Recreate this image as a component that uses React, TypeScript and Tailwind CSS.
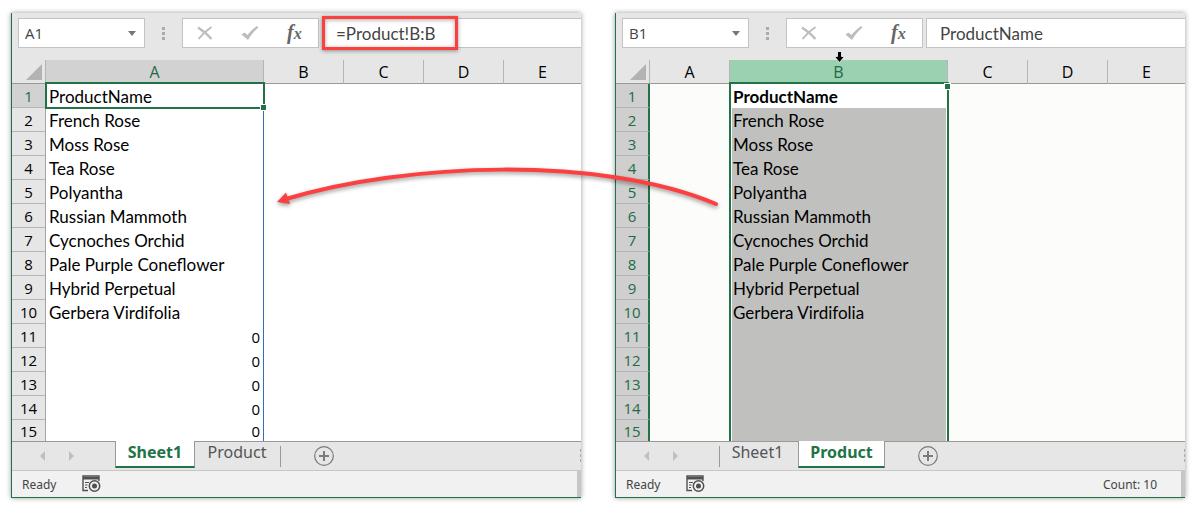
import { ReactNode } from "react";
import clsx from "clsx";

const products = [
  "ProductName",
  "French Rose",
  "Moss Rose",
  "Tea Rose",
  "Polyantha",
  "Russian Mammoth",
  "Cycnoches Orchid",
  "Pale Purple Coneflower",
  "Hybrid Perpetual",
  "Gerbera Virdifolia",
];

const rows = Array.from({ length: 15 }, (_, i) => i + 1);
const letters = ["A", "B", "C", "D", "E"];

function Grip() {
  return (
    <div className="flex flex-col gap-0.5">
      <span className="size-[3px] bg-[#ababab]" />
      <span className="size-[3px] bg-[#ababab]" />
      <span className="size-[3px] bg-[#ababab]" />
    </div>
  );
}

type FormulaBarProps = { id: string; cell: string; formula: string; children?: ReactNode };

function FormulaBar({ id, cell, formula, children }: FormulaBarProps) {
  return (
    <div className="flex h-[47px] items-start pt-[5px] pl-1.5 font-['Lato',sans-serif] text-[17px] text-[#444]">
      <div className="flex h-[30px] w-[127px] shrink-0 items-center border border-[#c3c3c3] bg-white">
        <input
          id={`${id}-name`}
          aria-label="Name Box"
          defaultValue={cell}
          className="w-full min-w-0 flex-1 pl-1.5 font-['Open_Sans',sans-serif] text-[15px] outline-none"
        />
        <button aria-label="Open names" className="px-2">
          <svg width="8" height="5" viewBox="0 0 8 5">
            <path d="M0 0h8L4 5z" fill="#777" />
          </svg>
        </button>
      </div>
      <div className="flex h-[30px] w-[37px] shrink-0 items-center justify-center">
        <Grip />
      </div>
      <div className="mr-[3px] flex h-[30px] w-[137px] shrink-0 items-center border border-[#c3c3c3] bg-white">
        <button aria-label="Cancel" className="ml-3.5">
          <svg width="16" height="16" viewBox="0 0 16 16" fill="none" stroke="#bdbdbd">
            <path d="M1 2.5C5 5 10 9 14.5 14" strokeWidth="2.6" />
            <path d="M14.5 2C10 5 5 9.5 1.5 14" strokeWidth="2" />
          </svg>
        </button>
        <button aria-label="Enter" className="ml-7">
          <svg width="18" height="16" viewBox="0 0 18 16">
            <path d="M.5 9.5L3.5 7.5L6.5 10C9 6.5 12.5 3.5 16 1L17.5 2.5C13 6 10 10 7 15z" fill="#bdbdbd" />
          </svg>
        </button>
        <button
          aria-label="Insert Function"
          className="ml-7 h-7 font-['Liberation_Serif',serif] text-xl leading-6 font-bold text-[#666] italic"
        >
          f<span className="text-base">x</span>
        </button>
      </div>
      <div className="relative min-w-0 flex-1">
        <input
          id={`${id}-formula`}
          aria-label="Formula Bar"
          defaultValue={formula}
          className="block h-[30px] w-full border border-r-0 border-[#c3c3c3] bg-white pl-[13px] outline-none"
        />
        {children}
      </div>
    </div>
  );
}

type GridProps = {
  wide: string;
  wholeColumn?: boolean;
};

function Grid({ wide, wholeColumn }: GridProps) {
  const text = (row: number) => products[row - 1] ?? (wholeColumn ? "" : "0");

  return (
    <div className="overflow-hidden">
      <table className="w-full table-fixed border-separate border-spacing-0 font-['Open_Sans',sans-serif] text-[15px] text-black">
        <colgroup>
          <col className="w-[34px]" />
          {letters.slice(0, 4).map((l) => (
            <col key={l} className={l === wide ? "w-[218px]" : "w-20"} />
          ))}
          <col />
        </colgroup>
        <thead>
          <tr className="h-6">
            <th className="border-r border-b border-r-[#b5b5b5] border-b-[#999] p-0">
              <svg className="ml-3.5" width="17" height="16" viewBox="0 0 17 16">
                <path d="M16 0v16H0z" fill="#b3b3b3" />
              </svg>
            </th>
            {letters.map((l) => (
              <th
                key={l}
                scope="col"
                className={clsx(
                  "border-b border-b-[#999] p-0 pt-0.5 text-base leading-[21px] font-normal",
                  l !== "E" && "border-r border-r-[#b5b5b5]",
                  l === wide && (wholeColumn ? "bg-[#9bd1b1] text-[#1e6b45]" : "bg-[#d2d2d2] text-[#1e6b45]"),
                )}
              >
                {l}
              </th>
            ))}
          </tr>
        </thead>
        <tbody>
          {rows.map((row) => (
            <tr key={row} className="h-6 last:h-[21px]">
              <th
                scope="row"
                className={clsx(
                  "border-r p-0 pt-px font-normal",
                  row === rows.length ? "leading-5" : "border-b border-b-[#b5b5b5] leading-[22px]",
                  wholeColumn
                    ? "border-r-2 border-r-[#217346] bg-[#cfcfcf] text-[#1e6b45]"
                    : "border-r-[#a5a5a5]",
                  !wholeColumn && row === 1 && "bg-[#d2d2d2] text-[#1e6b45]",
                )}
              >
                {row}
              </th>
              {letters.map((l) => {
                if (l !== wide) {
                  return <td key={l} className={wholeColumn ? "bg-[#fcfcfb]" : "bg-white"} />;
                }
                return (
                  <td
                    key={l}
                    className={clsx(
                      "relative px-[3px] pb-0 whitespace-nowrap",
                      row === rows.length ? "pt-px leading-5" : "pt-0.5 leading-[22px]",
                      row > products.length ? "text-right" : "font-['Lato',sans-serif] text-[17px]",
                      wholeColumn && row > 1 ? "bg-[#c0c0bf]" : "bg-white",
                      !wholeColumn && "border-r border-r-[#3d6bb3]",
                      wholeColumn && row === 1 && "font-bold",
                    )}
                  >
                    {text(row)}
                    {row === 1 && !wholeColumn && (
                      <span className="absolute -top-0.5 -right-0.5 -bottom-px -left-px z-10 border-2 border-[#217346]">
                        <span className="absolute -right-1 -bottom-1 size-[7px] border border-white bg-[#217346]" />
                      </span>
                    )}
                    {row === 1 && wholeColumn && (
                      <span className="absolute -top-0.5 -right-px -left-px z-10 h-96 border-2 border-[#217346]">
                        <span className="block h-full border-x border-white" />
                        <span className="absolute -top-px -right-1 size-[7px] border border-white bg-[#217346]" />
                      </span>
                    )}
                  </td>
                );
              })}
            </tr>
          ))}
        </tbody>
      </table>
    </div>
  );
}

type Sheet = "Sheet1" | "Product";

function SheetTabs({ active }: { active: Sheet }) {
  return (
    <div className="flex h-[30px] items-start border-t border-b border-t-[#999] border-b-[#c6c6c6] font-['Noto_Sans',sans-serif] text-base leading-5">
      <div className="flex w-[103px] shrink-0 items-center gap-6 pt-[9px] pl-7">
        <button aria-label="Previous sheet">
          <svg width="5" height="10" viewBox="0 0 5 10">
            <path d="M5 0v10L0 5z" fill="#bfbfbf" />
          </svg>
        </button>
        <button aria-label="Next sheet">
          <svg width="5" height="10" viewBox="0 0 5 10">
            <path d="M0 0v10l5-5z" fill="#bfbfbf" />
          </svg>
        </button>
      </div>
      {(["Sheet1", "Product"] as const).map((name) =>
        name === active ? (
          <button
            key={name}
            className={clsx(
              "-mt-px h-[27px] border-x border-b-2 border-x-[#999] border-b-[#217346] bg-white pb-1 font-bold text-[#217346]",
              name === "Sheet1" ? "w-20" : "w-[87px]",
            )}
          >
            {name}
          </button>
        ) : (
          <button
            key={name}
            className={clsx(
              "relative h-[25px] pr-0.5 pb-1.5 text-[#555]",
              name === "Sheet1" ? "w-[79px]" : "w-[86px]",
            )}
          >
            {name}
            <span
              className={clsx(
                "absolute top-1 bottom-0 w-px bg-[#999]",
                name === "Sheet1" ? "left-0" : "right-0",
              )}
            />
          </button>
        ),
      )}
      <button aria-label="New sheet" className="mt-1 ml-[33px]">
        <svg width="20" height="20" viewBox="0 0 20 20" fill="none" stroke="#7b7b7b">
          <circle cx="10" cy="10" r="9.3" strokeWidth="1.2" />
          <path d="M10 5v10M5 10h10" strokeWidth="2" />
        </svg>
      </button>
      <div className="mt-[7px] ml-auto w-px overflow-hidden">
        <Grip />
      </div>
    </div>
  );
}

function StatusBar({ count }: { count?: string }) {
  return (
    <div className="flex h-[26px] items-center border-r-4 border-[#c6c6c6] bg-[#f1f1f1] pl-2.5 font-['Noto_Sans',sans-serif] text-xs text-[#444]">
      <span className="w-[60px] pt-0.5">Ready</span>
      <button aria-label="Record macro">
        <svg width="19" height="18" viewBox="0 0 19 18" fill="none" stroke="#505050">
          <path d="M6 15.5H1V1h16v5" strokeWidth="1.4" />
          <path d="M1 3.2h16" strokeWidth="2.6" />
          <path d="M3 7.5h4M3 10h2.5M3 12.5h2" strokeWidth="1.2" />
          <circle cx="12.5" cy="11" r="5.2" strokeWidth="1.5" />
          <circle cx="12.5" cy="11" r="2.5" fill="#505050" stroke="none" />
        </svg>
      </button>
      {count && <span className="mr-6 ml-auto pt-0.5">{count}</span>}
    </div>
  );
}

function Workbook({ label, children }: { label: string; children: ReactNode }) {
  return (
    <section
      aria-label={label}
      className="min-w-0 flex-1 border-b border-l border-[#217346] bg-[#e6e6e6] shadow-[0_0_5px_rgba(0,0,0,0.4)]"
    >
      {children}
    </section>
  );
}

export default function App() {
  return (
    <main className="relative flex items-start gap-[34px] bg-white pt-[13px] pr-4 pb-2 pl-[11px]">
      <Workbook label="Sheet1 workbook">
        <FormulaBar id="left" cell="A1" formula="=Product!B:B">
          <span className="pointer-events-none absolute -top-0.5 left-0 h-[34px] w-[136px] border-[3px] border-[#fc4040] shadow-[0_1px_4px_rgba(0,0,0,0.4),inset_0_1px_4px_rgba(0,0,0,0.35)]" />
        </FormulaBar>
        <Grid wide="A" />
        <SheetTabs active="Sheet1" />
        <StatusBar />
      </Workbook>

      <Workbook label="Product workbook">
        <FormulaBar id="right" cell="B1" formula="ProductName" />
        <Grid wide="B" wholeColumn />
        <SheetTabs active="Product" />
        <StatusBar count="Count: 10" />
      </Workbook>

      {/* column-select cursor */}
      <svg className="absolute top-[51px] left-[834px]" width="11" height="12" viewBox="0 0 11 12">
        <path d="M3.5.5h4v5h3L5.5 11.5L.5 5.5h3z" fill="#000" stroke="#fff" strokeWidth="0.8" />
      </svg>

      <svg
        className="pointer-events-none absolute top-[150px] left-[260px] drop-shadow-[0_2px_2px_rgba(0,0,0,0.4)]"
        width="480"
        height="70"
        viewBox="260 150 480 70"
      >
        <path d="M286 199C405 163 600 155 716 204" fill="none" stroke="#fc4040" strokeWidth="4" strokeLinecap="round" />
        <path d="M277 202l9-9.5l4 11.5z" fill="#fc4040" />
      </svg>
    </main>
  );
}
